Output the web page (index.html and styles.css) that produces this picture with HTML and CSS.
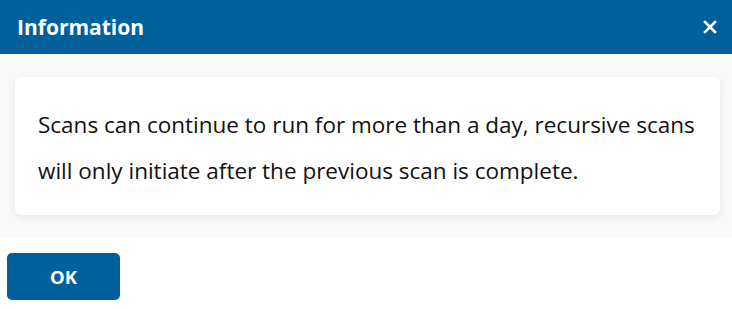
FILE: index.html
```html
<!DOCTYPE html>
<html>
<head>
<meta charset="utf-8">
<link rel="stylesheet" href="styles.css">
</head>
<body>
<div class="dialog">
  <div class="header">
    <span class="title">Information</span>
    <span class="close" aria-label="Close">
      <svg width="14" height="14" viewBox="0 0 14 14"><path d="M2 2 L12 12 M12 2 L2 12" stroke="#fff" stroke-width="2.6" stroke-linecap="square"/></svg>
    </span>
  </div>
  <div class="body">
    <div class="card">
      <p class="msg">Scans can continue to run for more than a day, recursive scans will only initiate after the previous scan is complete.</p>
    </div>
  </div>
  <div class="footer">
    <button class="ok">OK</button>
  </div>
</div>
</body>
</html>
```
FILE: styles.css
```css
html, body { margin: 0; padding: 0; background: #fff; }
body { font-family: "Open Sans", "Noto Sans", sans-serif; }
.dialog { width: 732px; }
.header {
  height: 54px;
  background: #00609b;
  display: flex;
  align-items: center;
  justify-content: space-between;
  padding: 0 15px 0 17px;
  box-sizing: border-box;
}
.title { color: #fff; font-weight: 700; font-size: 21px; }
.close { display: flex; width: 14px; height: 14px; }
.body {
  background: #f9f9f9;
  padding: 23px 12px 22px 15px;
}
.card {
  background: #fff;
  border-radius: 6px;
  box-shadow: 0 2px 8px rgba(0,0,0,0.08);
  padding: 25px 8px 0 23px;
  height: 138px;
  box-sizing: border-box;
}
.msg { margin: 0; font-size: 22.5px; line-height: 46px; color: #111; }
.footer { padding: 16px 7px; }
.ok {
  width: 113px; height: 47px;
  background: #00609b;
  color: #fff;
  border: none;
  border-radius: 5px;
  font-family: inherit;
  font-weight: 700;
  font-size: 18.5px;
}
```
